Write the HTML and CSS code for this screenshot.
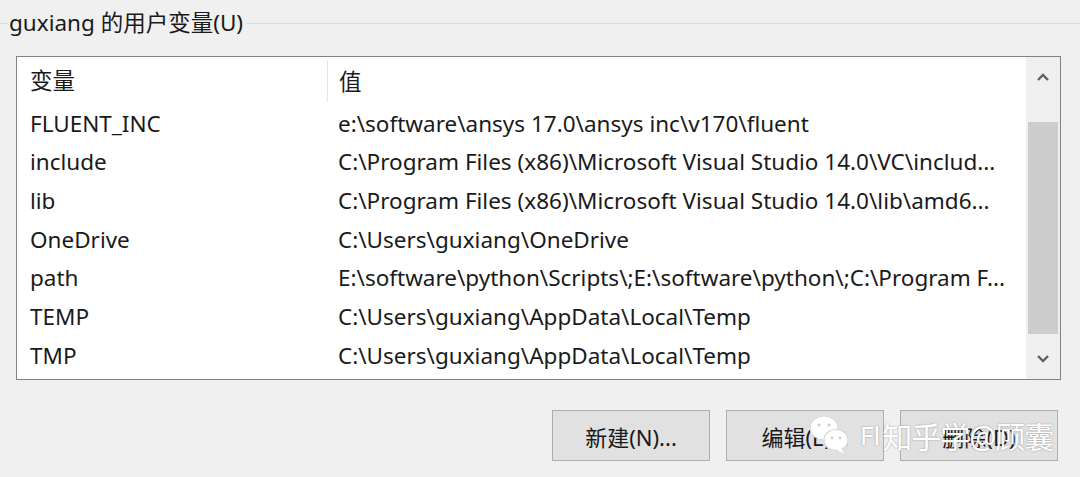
FILE: index.html
```html
<!DOCTYPE html>
<html lang="zh">
<head>
<meta charset="utf-8">
<link rel="stylesheet" href="styles.css">
</head>
<body>
<div class="group">
  <div class="legend"><span class="line-left"></span><span class="title">guxiang 的用户变量(U)</span><span class="line-right"></span></div>
  <div class="listbox">
    <div class="table">
      <div class="head">
        <div class="c1">变量</div>
        <div class="c2">值</div>
      </div>
      <div class="row"><div class="c1">FLUENT_INC</div><div class="c2">e:\software\ansys 17.0\ansys inc\v170\fluent</div></div>
      <div class="row"><div class="c1">include</div><div class="c2">C:\Program Files (x86)\Microsoft Visual Studio 14.0\VC\includ...</div></div>
      <div class="row"><div class="c1">lib</div><div class="c2">C:\Program Files (x86)\Microsoft Visual Studio 14.0\lib\amd6...</div></div>
      <div class="row"><div class="c1">OneDrive</div><div class="c2">C:\Users\guxiang\OneDrive</div></div>
      <div class="row"><div class="c1">path</div><div class="c2">E:\software\python\Scripts\;E:\software\python\;C:\Program F...</div></div>
      <div class="row"><div class="c1">TEMP</div><div class="c2">C:\Users\guxiang\AppData\Local\Temp</div></div>
      <div class="row"><div class="c1">TMP</div><div class="c2">C:\Users\guxiang\AppData\Local\Temp</div></div>
    </div>
    <div class="scrollbar">
      <div class="arrow"><svg width="14" height="10" viewBox="0 0 14 10"><path d="M2 8 L7 3 L12 8" fill="none" stroke="#606060" stroke-width="2.4"/></svg></div>
      <div class="track"><div class="thumb"></div></div>
      <div class="arrow"><svg width="14" height="10" viewBox="0 0 14 10"><path d="M2 2 L7 7 L12 2" fill="none" stroke="#606060" stroke-width="2.4"/></svg></div>
    </div>
  </div>
  <div class="buttons">
    <div class="btn">新建(N)...</div>
    <div class="btn">编辑(E)...</div>
    <div class="btn">删除(D)</div>
  </div>
</div>
<div class="watermark">
  <svg class="wx" width="44" height="42" viewBox="0 0 44 42">
    <ellipse cx="16" cy="14" rx="14" ry="12" fill="#fff" stroke="#d8d8d8" stroke-width="1"/>
    <circle cx="11" cy="11" r="1.6" fill="#cfcfcf"/>
    <circle cx="21" cy="11" r="1.6" fill="#cfcfcf"/>
    <ellipse cx="28" cy="26" rx="12" ry="10.5" fill="#fff" stroke="#d8d8d8" stroke-width="1.2"/>
    <path d="M33 34 L36 40 L29 36 Z" fill="#fff"/>
    <circle cx="24" cy="24" r="1.4" fill="#cfcfcf"/>
    <circle cx="32" cy="24" r="1.4" fill="#cfcfcf"/>
  </svg>
  <span class="wm-fl">Fl</span><span class="wm-text">知乎学@顾囊</span>
</div>
</body>
</html>
```

FILE: styles.css
```css
html, body {
  margin: 0;
  padding: 0;
  background: #f0f0f0;
  width: 1080px;
  height: 477px;
  overflow: hidden;
  font-family: "Noto Sans", "Noto Sans CJK SC", sans-serif;
  color: #1a1a1a;
  position: relative;
}
.group {
  display: flex;
  flex-direction: column;
}
.legend {
  display: flex;
  align-items: center;
  height: 46px;
}
.line-left {
  width: 8px;
  height: 1px;
  background: #dcdcdc;
  margin-right: 1px;
}
.title {
  font-size: 22.5px;
  line-height: 46px;
  padding: 0 3px 0 0;
  white-space: nowrap;
}
.line-right {
  flex: 1;
  height: 1px;
  background: #dcdcdc;
}
.listbox {
  margin-left: 16px;
  width: 1043px;
  height: 322px;
  border: 1px solid #828282;
  background: #fff;
  display: flex;
  margin-top: 10px;
}
.table {
  flex: 1;
  display: flex;
  flex-direction: column;
  font-size: 22.5px;
  overflow: hidden;
}
.head {
  display: flex;
  height: 47px;
  align-items: center;
}
.head .c1 {
  border-right: 1px solid #e5e5e5;
  height: 42px;
  line-height: 42px;
}
.row {
  display: flex;
  height: 38.67px;
  align-items: center;
}
.c1 {
  width: 297px;
  flex: none;
  padding-left: 13px;
  white-space: nowrap;
}
.c2 {
  padding-left: 11px;
  white-space: nowrap;
}
.scrollbar {
  width: 34px;
  flex: none;
  background: #f0f0f0;
  display: flex;
  flex-direction: column;
}
.arrow {
  height: 40px;
  display: flex;
  align-items: center;
  justify-content: center;
}
.track {
  flex: 1;
  padding: 25px 2px 5px 2px;
  display: flex;
}
.thumb {
  flex: 1;
  background: #cdcdcd;
}
.buttons {
  display: flex;
  gap: 16px;
  margin-top: 30px;
  margin-left: 552px;
}
.btn {
  width: 156px;
  height: 49px;
  border: 1px solid #adadad;
  background: #e1e1e1;
  display: flex;
  align-items: center;
  justify-content: center;
  font-size: 22px;
  white-space: nowrap;
}
.watermark {
  position: absolute;
  left: 808px;
  top: 413px;
  display: flex;
  align-items: center;
  color: #fff;
  font-size: 30px;
  text-shadow: 0 0 2px rgba(0,0,0,0.35);
  white-space: nowrap;
}
.wx {
  margin-right: 8px;
}
.wm-fl {
  font-size: 26px;
  margin-right: 2px;
}
.wm-text {
  letter-spacing: -1px;
}
```
